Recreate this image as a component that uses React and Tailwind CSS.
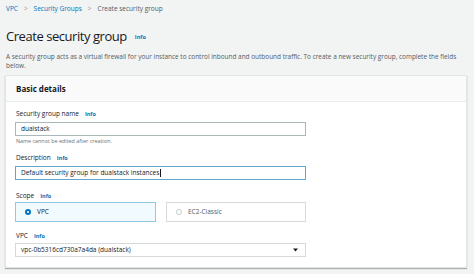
import React from "react";

function Info() {
  return <span className="ml-[6px] text-[5.5px] font-bold text-[#0073bb]">Info</span>;
}

export default function App() {
  return (
    <div className="w-[474px] h-[274px] overflow-hidden bg-[#f2f3f3] pl-[5px] text-[#16191f] font-['Open_Sans',sans-serif]">
      <div className="pl-[1px] pt-[4px] h-[14px] flex items-center text-[6.5px] leading-[10px]">
        <span className="text-[#0073bb]">VPC</span>
        <span className="mx-[6px] text-[#879596]">&gt;</span>
        <span className="text-[#0073bb]">Security Groups</span>
        <span className="mx-[6px] text-[#879596]">&gt;</span>
        <span className="text-[#545b64]">Create security group</span>
      </div>
      <div className="pl-[1px] mt-[10px] h-[24px] flex items-center">
        <span className="text-[13px] tracking-[-0.45px] leading-[24px] text-[#16191f]">Create security group</span>
        <span className="ml-[8px] text-[5.5px] font-bold text-[#0073bb] mt-[3px]">Info</span>
      </div>
      <div className="pl-[1px] mt-[4px] pr-[10px] text-[6.45px] leading-[9px] text-[#545b64]">
        A security group acts as a virtual firewall for your instance to control inbound and outbound traffic. To create a new security group, complete the fields below.
      </div>
      <div className="mt-[5px] w-[462px] h-[193px] bg-white border border-[#e4e6e6] shadow-[0_1px_1px_rgba(0,28,36,0.3)]">
        <div className="h-[26px] bg-[#fafafa] border-b border-[#eaeded] flex items-center pl-[10px]">
          <span className="text-[8px] font-bold text-[#16191f]">Basic details</span>
        </div>
        <div className="pl-[9px] pt-[7px]">
          <div className="h-[10px] flex items-center pl-[1px] text-[6.5px] text-[#16191f]">
            Security group name<Info />
          </div>
          <div className="mt-[3px] w-[291px] h-[14px] border border-[#aab7b8] flex items-center pl-[5px] text-[6.5px]">
            dualstack
          </div>
          <div className="h-[10px] flex items-center pl-[1px] text-[5.4px] text-[#687078]">
            Name cannot be edited after creation.
          </div>
          <div className="mt-[7px] h-[10px] flex items-center pl-[1px] text-[6.5px]">
            Description<Info />
          </div>
          <div className="mt-[3px] w-[291px] h-[14px] border border-[#5fa5c9] flex items-center pl-[5px] text-[6.5px]">
            Default security group for dualstack instances<span className="ml-[0.5px] w-[0.5px] h-[8px] bg-[#16191f]" />
          </div>
          <div className="mt-[11px] h-[10px] flex items-center pl-[1px] text-[6.5px]">
            Scope<Info />
          </div>
          <div className="mt-[1px] w-[291px] flex gap-[10px]">
            <div className="w-[141px] h-[20px] bg-[#f1faff] border border-[#8ecae6] flex items-center pl-[9px] text-[6.5px]">
              <span className="w-[6px] h-[6px] rounded-full border-[2px] border-[#0073bb] bg-white" />
              <span className="ml-[6px]">VPC</span>
            </div>
            <div className="w-[140px] h-[20px] border border-[#d5dbdb] flex items-center pl-[9px] text-[6.5px] text-[#545b64]">
              <span className="w-[6px] h-[6px] rounded-full border border-[#c6cccc] bg-white" />
              <span className="ml-[6px]">EC2-Classic</span>
            </div>
          </div>
          <div className="mt-[9px] h-[10px] flex items-center pl-[1px] text-[6.5px]">
            VPC<Info />
          </div>
          <div className="mt-[2px] w-[291px] h-[14px] border border-[#d5dbdb] flex items-center pl-[5px] pr-[7px] text-[6.5px]">
            <span className="flex-1">vpc-0b5316cd730a7a4da (dualstack)</span>
            <svg width="5" height="4" viewBox="0 0 5 4"><path d="M0 0.5 L5 0.5 L2.5 3.5 Z" fill="#16191f" /></svg>
          </div>
        </div>
      </div>
    </div>
  );
}
